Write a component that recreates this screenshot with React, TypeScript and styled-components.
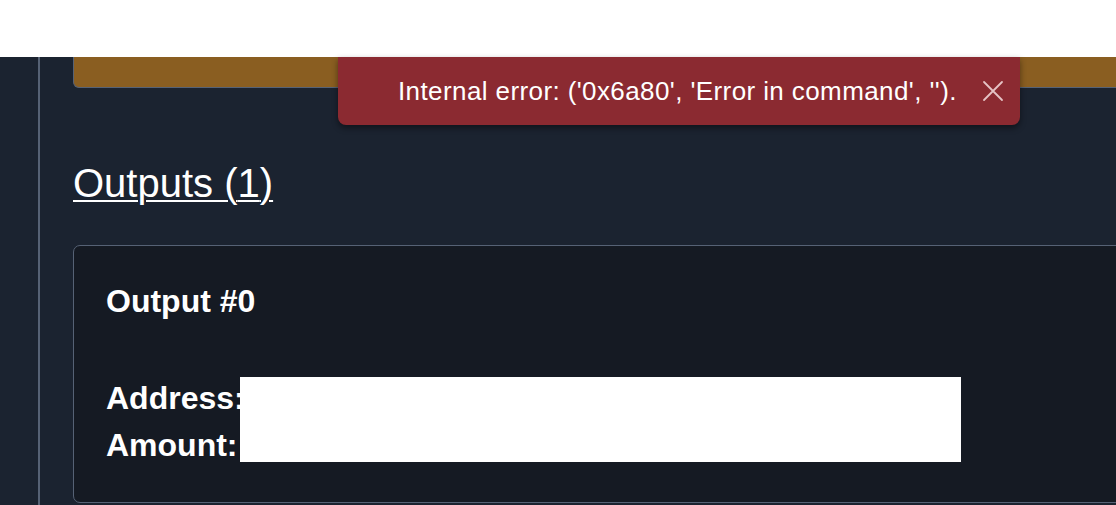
import React from "react"
import styled, { createGlobalStyle } from "styled-components"

const GlobalStyle = createGlobalStyle`
  html, body {
    margin: 0;
    padding: 0;
    background: #ffffff;
  }
  body {
    font-family: "Liberation Sans", Arial, sans-serif;
  }
`

interface OutputItem {
  index: number
}

const outputs: OutputItem[] = [{ index: 0 }]

const App: React.FunctionComponent = () => {
  return (
    <>
      <GlobalStyle />
      <Page>
        <TopBar />
        <Body>
          <Sidebar />
          <Main>
            <Banner />
            <SectionTitle href="#outputs">Outputs ({outputs.length})</SectionTitle>
            {outputs.map((output) => (
              <OutputCard key={output.index}>
                <CardTitle>Output #{output.index}</CardTitle>
                <Field>
                  Address:
                  <Redacted />
                </Field>
                <Field>Amount:</Field>
              </OutputCard>
            ))}
          </Main>
        </Body>
        <Toast role="alert">
          <ToastText>Internal error: ('0x6a80', 'Error in command', '').</ToastText>
          <CloseButton aria-label="Close">
            <svg width="22" height="22" viewBox="0 0 22 22">
              <path
                d="M2 2 L20 20 M20 2 L2 20"
                stroke="#e6c3c5"
                strokeWidth="1.8"
                strokeLinecap="round"
              />
            </svg>
          </CloseButton>
        </Toast>
      </Page>
    </>
  )
}

const Page = styled.div`
  position: relative;
  width: 1116px;
  height: 505px;
  overflow: hidden;
  display: flex;
  flex-direction: column;
`

const TopBar = styled.div`
  height: 57px;
  flex: none;
  background: #ffffff;
`

const Body = styled.div`
  flex: 1;
  display: flex;
  background: #1b2330;
`

const Sidebar = styled.div`
  width: 38px;
  flex: none;
  border-right: 2px solid #566275;
`

const Main = styled.div`
  flex: 1;
  min-width: 0;
  padding-left: 33px;
  display: flex;
  flex-direction: column;
  align-items: flex-start;
`

const Banner = styled.div`
  box-sizing: border-box;
  width: calc(100% + 12px);
  height: 31px;
  background: #8a5e21;
  border: 1px solid #566275;
  border-top: none;
  border-bottom-left-radius: 6px;
`

const SectionTitle = styled.a`
  margin-top: 72px;
  font-size: 40px;
  line-height: 46px;
  color: #ffffff;
  text-decoration: underline;
  text-underline-offset: 3px;
  text-decoration-thickness: 2px;
`

const OutputCard = styled.div`
  box-sizing: border-box;
  margin-top: 39px;
  width: calc(100% + 12px);
  height: 258px;
  padding: 37px 32px 0;
  background: #151a23;
  border: 1px solid #566275;
  border-radius: 7px;
  color: #ffffff;
`

const CardTitle = styled.div`
  font-size: 32px;
  font-weight: bold;
  line-height: 36px;
  margin-bottom: 56px;
`

const Field = styled.div`
  position: relative;
  font-size: 32px;
  font-weight: bold;
  line-height: 47px;
`

const Redacted = styled.span`
  position: absolute;
  left: 134px;
  top: 2px;
  width: 721px;
  height: 85px;
  background: #ffffff;
`

const Toast = styled.div`
  position: absolute;
  left: 338px;
  top: 57px;
  width: 682px;
  height: 68px;
  box-sizing: border-box;
  padding: 0 16px 0 60px;
  display: flex;
  align-items: center;
  justify-content: space-between;
  background: #8b2a31;
  border-radius: 0 0 8px 8px;
  box-shadow: 0 3px 6px rgba(0, 0, 0, 0.45);
`

const ToastText = styled.span`
  font-size: 26px;
  letter-spacing: 0.4px;
  color: #ffffff;
  margin-top: 1px;
`

const CloseButton = styled.button`
  border: none;
  background: none;
  padding: 0;
  display: flex;
  cursor: pointer;
`

export default App
